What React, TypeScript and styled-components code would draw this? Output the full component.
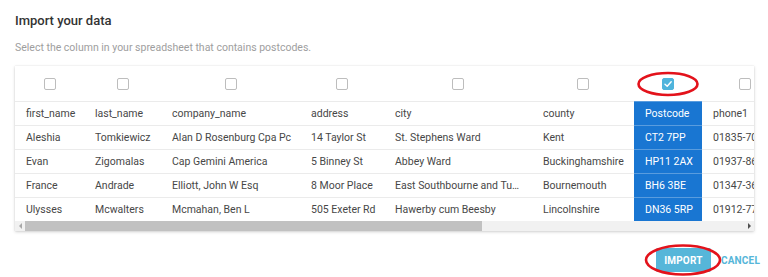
import React from "react";
import styled, { createGlobalStyle } from "styled-components";

const GlobalStyle = createGlobalStyle`
  html, body { margin: 0; padding: 0; background: #fff; }
  body { font-family: Roboto, "Noto Sans", "Liberation Sans", Arial, sans-serif; }
  * { box-sizing: border-box; }
`;

const Page = styled.div`
  width: 768px;
  height: 277px;
  padding: 12px 14px 0 15px;
  overflow: hidden;
`;

const Title = styled.h1`
  margin: 0;
  font-size: 13px;
  line-height: 18px;
  font-weight: 500;
  color: #333;
`;

const Subtitle = styled.p`
  margin: 10px 0 0;
  font-size: 10.5px;
  line-height: 16px;
  color: #9e9e9e;
`;

const Card = styled.div`
  margin-top: 10px;
  background: #fff;
  box-shadow: 0 1px 3px rgba(0, 0, 0, 0.18), 0 0 1px rgba(0, 0, 0, 0.12);
`;

const Viewport = styled.div`
  overflow: hidden;
`;

const Scrollbar = styled.div`
  display: flex;
  height: 10px;
  background: #f1f1f1;
`;

const ScrollArrow = styled.div<{ $dir: "left" | "right"; $enabled?: boolean }>`
  flex: 0 0 10px;
  display: flex;
  align-items: center;
  justify-content: center;
  &::before {
    content: "";
    width: 0;
    height: 0;
    border-top: 3px solid transparent;
    border-bottom: 3px solid transparent;
    ${(p) =>
      p.$dir === "left"
        ? `border-right: 3px solid ${p.$enabled ? "#505050" : "#a8a8a8"};`
        : `border-left: 3px solid ${p.$enabled ? "#505050" : "#a8a8a8"};`}
  }
`;

const Track = styled.div`
  flex: 1;
  display: flex;
`;

const Thumb = styled.div`
  height: 100%;
  background: #c1c1c1;
`;

const Table = styled.table`
  border-collapse: separate;
  border-spacing: 0;
  table-layout: fixed;
  width: 1162px;
  font-size: 10.5px;
  color: #474747;
`;

const CheckCell = styled.td`
  position: relative;
  height: 35px;
  padding: 0;
  text-align: center;
  vertical-align: middle;
`;

const Cell = styled.td<{ $selected?: boolean; $truncate?: boolean }>`
  height: 24px;
  padding: 0 4px 0 11px;
  border-top: 1px solid ${(p) => (p.$selected ? "rgba(255,255,255,0.28)" : "#ebebeb")};
  background: ${(p) => (p.$selected ? "#1976d2" : "transparent")};
  color: ${(p) => (p.$selected ? "#fff" : "#474747")};
  font-weight: 400;
  text-align: left;
  white-space: nowrap;
  overflow: hidden;
  text-overflow: ${(p) => (p.$truncate ? "ellipsis" : "clip")};
  ${(p) => (p.$truncate ? "padding-right: 12px;" : "")}
  vertical-align: middle;
`;

const Box = styled.span<{ $checked?: boolean }>`
  display: inline-flex;
  align-items: center;
  justify-content: center;
  width: 12px;
  height: 12px;
  border: 1px solid ${(p) => (p.$checked ? "#4fb4dc" : "#bdbdbd")};
  border-radius: 2px;
  background: ${(p) => (p.$checked ? "#4fb4dc" : "#fff")};
  vertical-align: middle;
`;

const Ring = styled.svg<{ $w: number; $h: number }>`
  position: absolute;
  left: 50%;
  top: 50%;
  width: ${(p) => p.$w}px;
  height: ${(p) => p.$h}px;
  transform: translate(-50%, -50%);
  pointer-events: none;
  overflow: visible;
`;

const Footer = styled.div`
  display: flex;
  justify-content: flex-end;
  align-items: center;
  gap: 10px;
  margin-top: 17px;
  margin-right: -6px;
`;

const Marked = styled.div`
  position: relative;
  display: inline-flex;
`;

const PrimaryButton = styled.button`
  height: 24px;
  width: 55px;
  padding: 0;
  border: none;
  border-radius: 2px;
  background: #56b6d9;
  color: #fff;
  font-family: inherit;
  font-size: 10px;
  font-weight: 700;
  letter-spacing: 0.2px;
`;

const TextButton = styled.button`
  height: 24px;
  padding: 0;
  border: none;
  background: transparent;
  color: #56b6d9;
  font-family: inherit;
  font-size: 10px;
  font-weight: 700;
  letter-spacing: 0.2px;
`;

const RedEllipse = ({ w, h }: { w: number; h: number }) => (
  <Ring $w={w} $h={h} viewBox={`0 0 ${w} ${h}`}>
    <ellipse cx={w / 2} cy={h / 2} rx={w / 2 - 1.5} ry={h / 2 - 1.5} fill="none" stroke="#e3121b" strokeWidth={2.6} />
  </Ring>
);

const Checkbox = ({ checked }: { checked?: boolean }) => (
  <Box $checked={checked}>
    {checked && (
      <svg width="10" height="10" viewBox="0 0 10 10">
        <polyline points="2,5.2 4.2,7.2 8.2,2.8" fill="none" stroke="#fff" strokeWidth="1.4" strokeLinecap="round" strokeLinejoin="round" />
      </svg>
    )}
  </Box>
);

const columns = [
  { key: "first_name", width: 69 },
  { key: "last_name", width: 77 },
  { key: "company_name", width: 139 },
  { key: "address", width: 84 },
  { key: "city", width: 148, truncate: true },
  { key: "county", width: 102 },
  { key: "Postcode", width: 68 },
  { key: "phone1", width: 86 },
  { key: "phone2", width: 86 },
  { key: "email", width: 150, truncate: true },
  { key: "web", width: 153, truncate: true },
];

const SELECTED = 6;
const TABLE_WIDTH = 1162;
const VISIBLE_WIDTH = 739;

const rows = [
  ["Aleshia", "Tomkiewicz", "Alan D Rosenburg Cpa Pc", "14 Taylor St", "St. Stephens Ward", "Kent", "CT2 7PP", "01835-703597", "01944-369967", "atomkiewicz@hotmail.com", "http://www.alandrosenburgcpapc.co.uk"],
  ["Evan", "Zigomalas", "Cap Gemini America", "5 Binney St", "Abbey Ward", "Buckinghamshire", "HP11 2AX", "01937-864715", "01714-737668", "evan.zigomalas@gmail.com", "http://www.capgeminiamerica.co.uk"],
  ["France", "Andrade", "Elliott, John W Esq", "8 Moor Place", "East Southbourne and Tuckton W", "Bournemouth", "BH6 3BE", "01347-368222", "01935-821636", "france.andrade@hotmail.com", "http://www.elliottjohnwesq.co.uk"],
  ["Ulysses", "Mcwalters", "Mcmahan, Ben L", "505 Exeter Rd", "Hawerby cum Beesby", "Lincolnshire", "DN36 5RP", "01912-771311", "01302-601380", "ulysses@hotmail.com", "http://www.mcmahanbenl.co.uk"],
];

export default function App() {
  const thumbPct = (VISIBLE_WIDTH / TABLE_WIDTH) * 100;
  return (
    <>
      <GlobalStyle />
      <Page>
        <Title>Import your data</Title>
        <Subtitle>Select the column in your spreadsheet that contains postcodes.</Subtitle>
        <Card>
          <Viewport>
            <Table>
              <colgroup>
                {columns.map((c) => (
                  <col key={c.key} style={{ width: c.width }} />
                ))}
              </colgroup>
              <thead>
                <tr>
                  {columns.map((c, i) => (
                    <CheckCell key={c.key}>
                      <Checkbox checked={i === SELECTED} />
                      {i === SELECTED && <RedEllipse w={62} h={25} />}
                    </CheckCell>
                  ))}
                </tr>
                <tr>
                  {columns.map((c, i) => (
                    <Cell as="th" key={c.key} $selected={i === SELECTED}>
                      {c.key}
                    </Cell>
                  ))}
                </tr>
              </thead>
              <tbody>
                {rows.map((r, ri) => (
                  <tr key={ri}>
                    {r.map((v, i) => (
                      <Cell key={i} $selected={i === SELECTED} $truncate={columns[i].truncate}>
                        {v}
                      </Cell>
                    ))}
                  </tr>
                ))}
              </tbody>
            </Table>
          </Viewport>
          <Scrollbar>
            <ScrollArrow $dir="left" />
            <Track>
              <Thumb style={{ width: `${thumbPct}%` }} />
            </Track>
            <ScrollArrow $dir="right" $enabled />
          </Scrollbar>
        </Card>
        <Footer>
          <Marked>
            <PrimaryButton>IMPORT</PrimaryButton>
            <RedEllipse w={77} h={32} />
          </Marked>
          <TextButton>CANCEL</TextButton>
        </Footer>
      </Page>
    </>
  );
}
